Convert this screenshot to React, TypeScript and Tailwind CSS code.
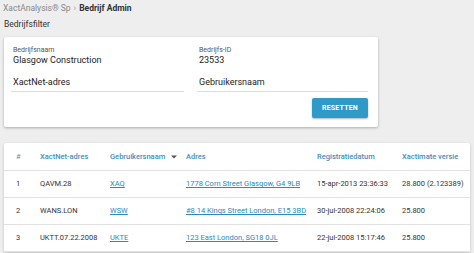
import React from 'react';

interface Row {
  id: number;
  net: string;
  user: string;
  address: string;
  date: string;
  version: string;
}

const rows: Row[] = [
  { id: 1, net: 'QAVM.28', user: 'XAQ', address: '1778 Corn Street Glasgow, G4 9LB', date: '15-apr-2013 23:36:33', version: '28.800 (2.123389)' },
  { id: 2, net: 'WANS.LON', user: 'WSW', address: '#8 14 Kings Street London, E15 3BD', date: '30-jul-2008 22:24:06', version: '25.800' },
  { id: 3, net: 'UKTT.07.22.2008', user: 'UKTE', address: '123 East London, SG18 0JL', date: '22-jul-2008 15:17:46', version: '25.800' },
];

const Field: React.FC<{ label?: string; value: string; underline?: boolean }> = ({ label, value, underline }) => (
  <div className={underline ? 'border-b border-[#dcdcdc] pb-[3px]' : ''}>
    {label && <div className="pl-[2px] text-[7px] leading-[9px] text-[#555]">{label}</div>}
    <div className="pl-[2px] text-[9px] leading-[11px] text-[#222]">{value}</div>
  </div>
);

export default function App() {
  return (
    <div className="w-[474px] h-[253px] overflow-hidden bg-[#eeeeee] font-['Roboto','Liberation_Sans',sans-serif]">
      {/* breadcrumb */}
      <div className="pl-[3px] pt-[2px] h-[14px] flex items-center text-[8.5px] text-[#888]">
        <span>XactAnalysis® Sp</span>
        <span className="mx-[3px] text-[#999]">›</span>
        <span className="font-bold text-[#333]">Bedrijf Admin</span>
      </div>
      <div className="pl-[4px] mt-[5px] text-[8.5px] leading-[11px] text-[#333]">Bedrijfsfilter</div>

      {/* filter card */}
      <div className="ml-[4px] mt-[7px] w-[374px] h-[90px] bg-white rounded-[2px] shadow-[0_1px_3px_rgba(0,0,0,0.28)] pl-[7px] pr-[10px] pt-[9px]">
        <div className="grid grid-cols-[173px_171px] gap-x-[13px]">
          <Field label="Bedrijfsnaam" value="Glasgow Construction" />
          <Field label="Bedrijfs-ID" value="23533" />
          <div className="mt-[11px]"><Field value="XactNet-adres" underline /></div>
          <div className="mt-[11px]"><Field value="Gebruikersnaam" underline /></div>
        </div>
        <div className="flex justify-end mt-[6px]">
          <button className="w-[56px] h-[20px] bg-[#2f9ac6] text-white text-[7px] font-bold tracking-[0.2px] rounded-[2px] shadow-[0_1px_2px_rgba(0,0,0,0.3)]">
            RESETTEN
          </button>
        </div>
      </div>

      {/* table card */}
      <div className="ml-[4px] mt-[16px] w-[466px] bg-white rounded-[2px] shadow-[0_1px_3px_rgba(0,0,0,0.2)] text-[7.5px]">
        <div className="flex items-center h-[28px] border-b border-[#e2e2e2] text-[#3f8fc2] font-medium">
          <div className="w-[36px] pl-[12px] text-[#888] font-normal">#</div>
          <div className="w-[70px]">XactNet-adres</div>
          <div className="w-[76px] flex items-center">
            <span>Gebruikersnaam</span>
            <svg className="ml-[6px]" width="6" height="4" viewBox="0 0 6 4"><path d="M0 0.5 L6 0.5 L3 3.5 Z" fill="#555" /></svg>
          </div>
          <div className="w-[131px]">Adres</div>
          <div className="w-[85px]">Registratiedatum</div>
          <div>Xactimate versie</div>
        </div>
        {rows.map((r) => (
          <div key={r.id} className="flex items-center h-[27px] border-b border-[#e2e2e2] text-[#333]">
            <div className="w-[36px] pl-[12px]">{r.id}</div>
            <div className="w-[70px]">{r.net}</div>
            <div className="w-[76px] text-[#2a89c0] underline">{r.user}</div>
            <div className="w-[131px] text-[#2a89c0] underline whitespace-nowrap">{r.address}</div>
            <div className="w-[85px] whitespace-nowrap">{r.date}</div>
            <div className="whitespace-nowrap">{r.version}</div>
          </div>
        ))}
      </div>
    </div>
  );
}
